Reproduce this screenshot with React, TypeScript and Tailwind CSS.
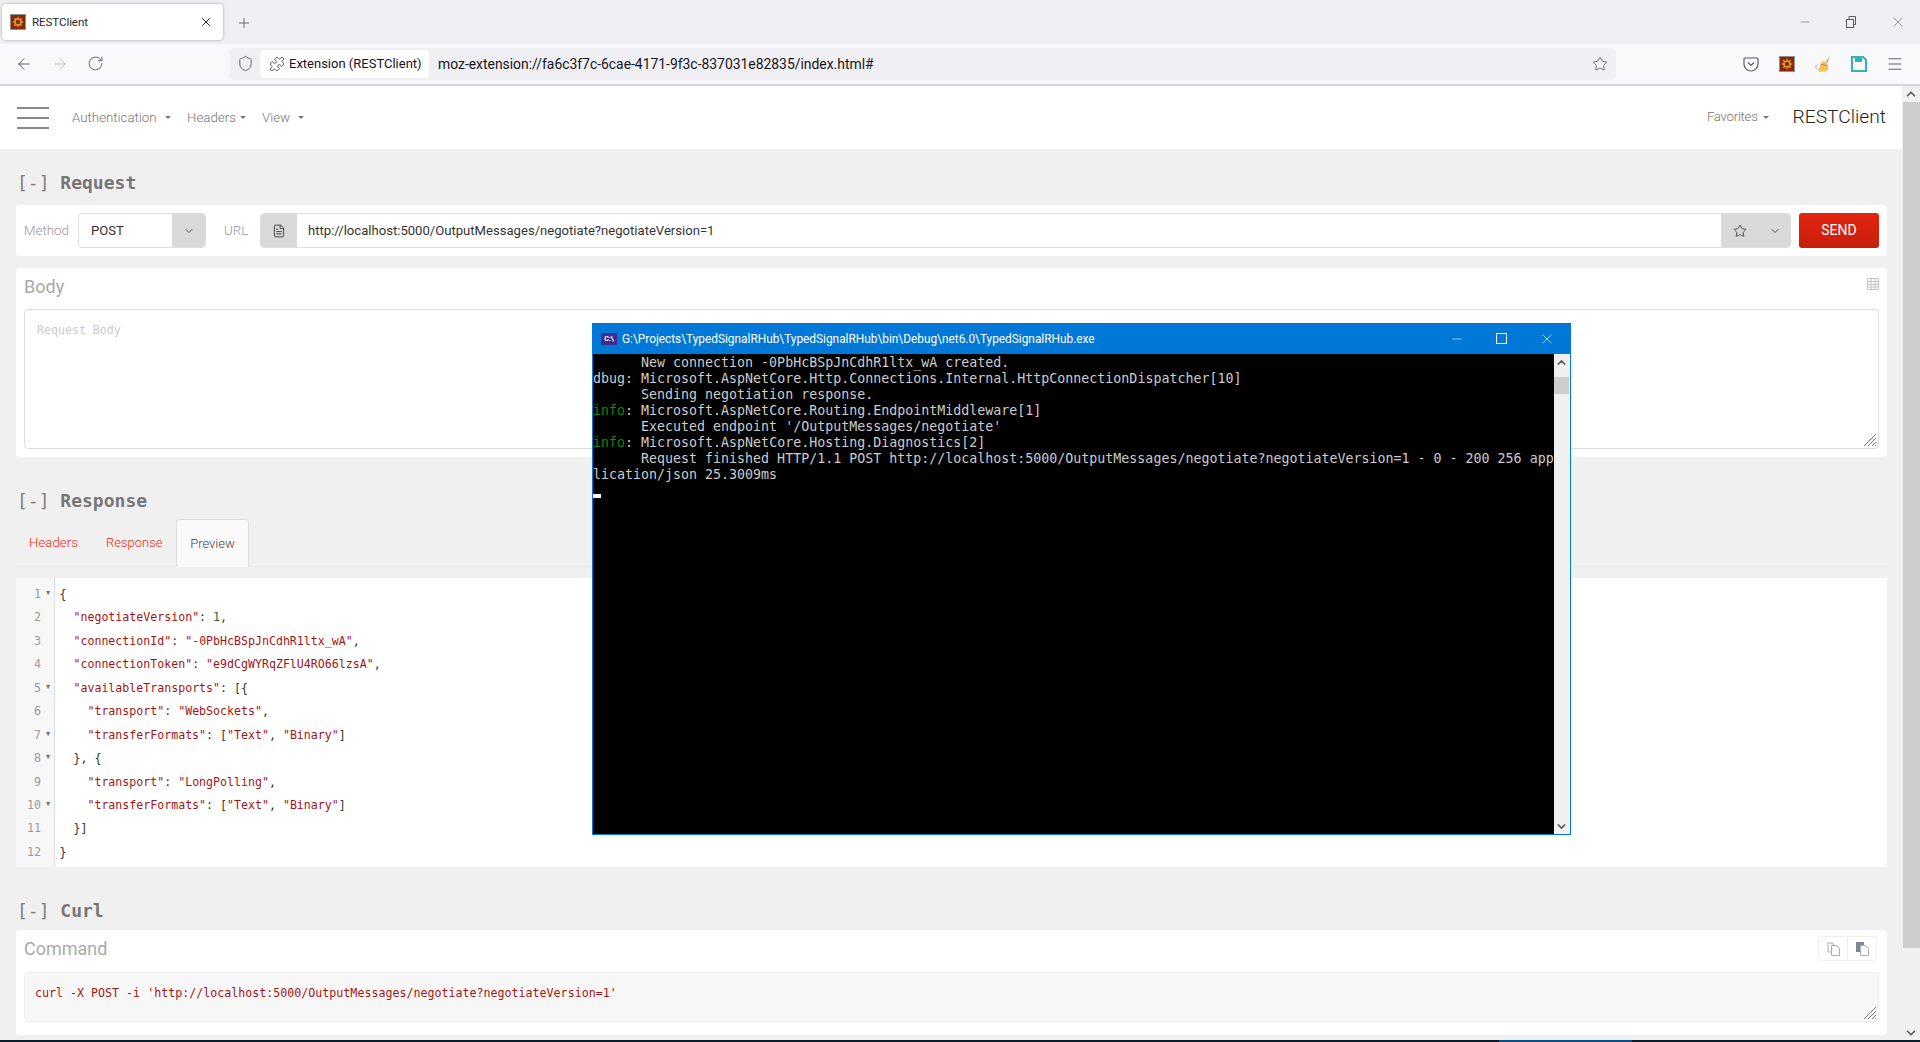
import React from "react";
import {
  ArrowLeft,
  ArrowRight,
  ChevronDown,
  ChevronUp,
  FileText,
  Menu,
  Minus,
  Plus,
  Puzzle,
  RotateCw,
  Shield,
  Star,
  X,
} from "lucide-react";

const sans = "font-['Roboto',sans-serif]";
const mono = "font-['DejaVu_Sans_Mono',monospace]";

function Favicon() {
  return (
    <svg width="16" height="16" viewBox="0 0 16 16" className="shrink-0">
      <rect x="0.500" y="0.500" width="15" height="15" fill="#86270b" stroke="#8f8f8f" />
      <circle cx="8" cy="8" r="3" fill="none" stroke="#e0a02a" strokeWidth="1.500" />
      <path d="M8 2.800v2M8 11.200v2M2.800 8h2M11.200 8h2M4.300 4.300l1.400 1.400M10.300 10.300l1.400 1.400M4.300 11.700l1.400-1.400M10.300 5.700l1.400-1.400" stroke="#e0a02a" strokeWidth="1.300" />
    </svg>
  );
}

function Caret({ gap = "ml-[5px]" }: { gap?: string }) {
  return <span className={`${gap} inline-block border-x-[3px] border-t-[3px] border-x-transparent border-t-[#777] align-middle`} />;
}

function Resize() {
  return (
    <svg width="14" height="14" viewBox="0 0 14 14" className="absolute bottom-[1px] right-[1px]">
      <path d="M1 13L13 1M5 13L13 5M9 13L13 9M12 13L13 12" stroke="#777" strokeWidth="1" />
    </svg>
  );
}

function TabStrip() {
  return (
    <div className="flex h-[44px] items-start bg-[#f0f0f4]">
      <div className="ml-[2px] mt-[4px] flex h-[36px] w-[221px] items-center rounded-[4px] bg-white pl-[8px] pr-[10px] shadow-[0_0_3px_rgba(0,0,0,0.35)]">
        <Favicon />
        <span className={`ml-[6px] mt-[1px] flex-1 text-[11.6px] tracking-[-0.1px] text-[#2a2a33] ${sans}`}>RESTClient</span>
        <X size={14} strokeWidth={1.6} className="text-[#15141a]" />
      </div>
      <Plus size={16} strokeWidth={1.3} className="ml-[13px] mt-[15px] text-[#5b5b66]" />
      <div className="ml-auto mr-[14px] mt-[14px] flex items-center gap-[32px] text-[#5b5b66]">
        <Minus size={14} strokeWidth={1} />
        <svg width="14" height="14" viewBox="0 0 14 14" fill="none" stroke="currentColor">
          <rect x="2.500" y="4.500" width="7" height="8" />
          <path d="M5 4.500V1.500h6.500v8H9.500" />
        </svg>
        <X size={16} strokeWidth={0.9} />
      </div>
    </div>
  );
}

function Toolbar() {
  return (
    <div className="flex h-[42px] items-center border-b-2 border-[#d4d4d6] bg-[#f9f9fb] pb-[1px] text-[#5b5b66]">
      <ArrowLeft size={18} strokeWidth={1.3} className="ml-[15px]" />
      <ArrowRight size={18} strokeWidth={1.3} className="ml-[18px] text-[#bdbdc3]" />
      <RotateCw size={17} strokeWidth={1.3} className="ml-[18px]" />
      <div className="ml-[126px] flex h-[32px] w-[1386px] items-center rounded-[4px] bg-[#f0f0f4] pl-[7px]">
        <Shield size={17} strokeWidth={1.3} />
        <div className={`ml-[6px] flex h-[28px] w-[169px] items-center rounded-[4px] bg-white pl-[9px] text-[#15141a] ${sans}`}>
          <Puzzle size={16} strokeWidth={1.2} className="mr-[4px] text-[#3c3c44]" />
          <span className="mt-[1px] text-[13px]">Extension (RESTClient)</span>
        </div>
        <span className={`ml-[9px] mt-[2px] text-[13.9px] text-[#15141a] ${sans}`}>moz-extension://fa6c3f7c-6cae-4171-9f3c-837031e82835/index.html#</span>
        <Star size={16} strokeWidth={1.3} className="ml-auto mr-[8px]" />
      </div>
      <svg width="16" height="16" viewBox="0 0 16 16" fill="none" stroke="#5b5b66" strokeWidth="1.2" className="ml-[127px]">
        <path d="M2 2h12a1 1 0 0 1 1 1v5a7 7 0 0 1-14 0V3a1 1 0 0 1 1-1z" />
        <path d="M5 6.500l3 3 3-3" />
      </svg>
      <div className="ml-[20px]"><Favicon /></div>
      <svg width="18" height="18" viewBox="0 0 18 18" className="ml-[19px]">
        <path d="M15.500 1l-3.500 6 1.500 1z" fill="#c99a3a" />
        <path d="M10 6c-3 1-4.500 5-6 10 3 1.500 8.500 1 10-1 1-3 0-7-4-9z" fill="#eec35c" />
        <path d="M7 9c2 1 4 2 6 1" stroke="#e07b5a" strokeWidth="1.200" fill="none" />
        <path d="M4 9l-2 3 1 3M2 10l-1 3" stroke="#c9c9c9" fill="none" />
      </svg>
      <svg width="16" height="16" viewBox="0 0 16 16" fill="none" className="ml-[19px]">
        <path d="M1 1h11l3 3v11H1z" stroke="#2fb2b4" strokeWidth="2" />
        <rect x="4" y="1" width="7" height="5" fill="#2fb2b4" />
      </svg>
      <Menu size={18} strokeWidth={1.3} className="ml-[19px]" />
    </div>
  );
}

function NavItem({ label, gap, className = "" }: { label: string; gap?: string; className?: string }) {
  return (
    <span className={`text-[13.3px] font-light text-[#777] ${className}`}>
      {label}
      <Caret gap={gap} />
    </span>
  );
}

function Navbar() {
  return (
    <div className={`flex h-[63px] items-center bg-white ${sans}`}>
      <div className="ml-[17px] flex w-[32px] flex-col gap-[8px]">
        <div className="h-[2px] bg-[#888]" />
        <div className="h-[2px] bg-[#888]" />
        <div className="h-[2px] bg-[#888]" />
      </div>
      <div className="mb-[2px] ml-[23px] w-[115px]"><NavItem label="Authentication" gap="ml-[8px]" /></div>
      <div className="mb-[2px] w-[75px]"><NavItem label="Headers" gap="ml-[4px]" /></div>
      <div className="mb-[2px] w-[60px]"><NavItem label="View" gap="ml-[8px]" /></div>
      <NavItem label="Favorites" className="mb-[2px] ml-auto tracking-[-0.3px]" />
      <span className="ml-[24px] mr-[16px] text-[19.200px] font-light text-[#222]">RESTClient</span>
    </div>
  );
}

function Heading({ title, className = "" }: { title: string; className?: string }) {
  return (
    <div className={`ml-[17px] h-[24px] text-[18px] leading-[24px] text-[#808080] ${mono} ${className}`}>
      [-] <span className="font-bold text-[#767676]">{title}</span>
    </div>
  );
}

function RequestPanel() {
  return (
    <div className={`ml-[16px] mr-[15px] mt-[10px] flex h-[51px] items-center rounded-[3px] bg-white px-[8px] ${sans}`}>
      <span className="w-[54px] text-[13.3px] font-light text-[#999]">Method</span>
      <div className="flex h-[35px] w-[128px] overflow-hidden rounded-[4px] border border-[#ddd]">
        <span className="flex-1 pl-[12px] text-[13.1px] leading-[34px] text-[#333]">POST</span>
        <div className="flex w-[33px] items-center justify-center bg-[#d9d9d9]">
          <ChevronDown size={12} strokeWidth={2} className="text-[#555]" />
        </div>
      </div>
      <span className="ml-[18px] w-[36px] text-[13.3px] font-light text-[#999]">URL</span>
      <div className="flex h-[35px] flex-1 overflow-hidden rounded-[4px] border border-[#ddd]">
        <div className="flex w-[36px] items-center justify-center bg-[#d9d9d9]">
          <FileText size={14} strokeWidth={1.7} className="text-[#444]" />
        </div>
        <span className="flex-1 pl-[11px] text-[13.1px] leading-[34px] text-[#333]">http://localhost:5000/OutputMessages/negotiate?negotiateVersion=1</span>
        <div className="flex w-[69px] items-center bg-[#d9d9d9]">
          <Star size={14} strokeWidth={1.6} className="ml-[12px] text-[#444]" />
          <ChevronDown size={12} strokeWidth={2} className="ml-[22px] text-[#555]" />
        </div>
      </div>
      <div className="ml-[8px] flex h-[35px] w-[80px] items-center justify-center rounded-[3px] bg-gradient-to-b from-[#e2250f] to-[#c81e0c] text-[14px] text-white">SEND</div>
    </div>
  );
}

function BodyPanel() {
  return (
    <div className={`relative ml-[16px] mr-[15px] mt-[12px] h-[189px] rounded-[3px] bg-white px-[8px] pt-[41px] ${sans}`}>
      <span className="absolute left-[8px] top-[5px] text-[18px] text-[#aaa]">Body</span>
      <svg width="12" height="12" viewBox="0 0 12 12" fill="none" stroke="#c4c4c4" className="absolute right-[8px] top-[10px]">
        <path d="M0.500 0.500h11v11h-11zM0.500 3.500h11M0.500 6.500h11M0.500 9h11M4 0.500v11M8 0.500v11" />
      </svg>
      <div className="relative h-[140px] rounded-[4px] border border-[#ddd] pl-[12px] pt-[11px]">
        <span className={`block text-[11.6px] leading-[18px] text-[#ccc] ${mono}`}>Request Body</span>
        <Resize />
      </div>
    </div>
  );
}

function Tabs() {
  return (
    <div className={`ml-[16px] mr-[15px] mt-[6px] flex h-[48px] border-b border-[#eaeaea] ${sans}`}>
      <span className="ml-[13px] w-[49px] self-center text-[13.3px] font-light text-[#f0281a]">Headers</span>
      <span className="ml-[28px] w-[56px] self-center text-[13px] font-light text-[#f0281a]">Response</span>
      <span className="ml-[14px] flex h-[48px] w-[73px] items-center justify-center rounded-t-[4px] border border-b-0 border-[#ddd] bg-[#fafafa] text-[13px] font-light text-[#444]">Preview</span>
    </div>
  );
}

type Tok = [string, "k" | "s" | "n" | "p"];

const tokColor = { k: "text-[#a31515]", s: "text-[#a31515]", n: "text-[#116644]", p: "text-[#333]" };

const code: { fold?: boolean; indent: number; toks: Tok[] }[] = [
  { fold: true, indent: 0, toks: [["{", "p"]] },
  { indent: 2, toks: [['"negotiateVersion"', "k"], [": ", "p"], ["1", "n"], [",", "p"]] },
  { indent: 2, toks: [['"connectionId"', "k"], [": ", "p"], ['"-0PbHcBSpJnCdhR1ltx_wA"', "s"], [",", "p"]] },
  { indent: 2, toks: [['"connectionToken"', "k"], [": ", "p"], ['"e9dCgWYRqZFlU4RO66lzsA"', "s"], [",", "p"]] },
  { fold: true, indent: 2, toks: [['"availableTransports"', "k"], [": [{", "p"]] },
  { indent: 4, toks: [['"transport"', "k"], [": ", "p"], ['"WebSockets"', "s"], [",", "p"]] },
  { fold: true, indent: 4, toks: [['"transferFormats"', "k"], [": [", "p"], ['"Text"', "s"], [", ", "p"], ['"Binary"', "s"], ["]", "p"]] },
  { fold: true, indent: 2, toks: [["}, {", "p"]] },
  { indent: 4, toks: [['"transport"', "k"], [": ", "p"], ['"LongPolling"', "s"], [",", "p"]] },
  { fold: true, indent: 4, toks: [['"transferFormats"', "k"], [": [", "p"], ['"Text"', "s"], [", ", "p"], ['"Binary"', "s"], ["]", "p"]] },
  { indent: 2, toks: [["}]", "p"]] },
  { indent: 0, toks: [["}", "p"]] },
];

function CodePanel() {
  return (
    <div className={`ml-[16px] mr-[15px] mt-[11px] flex h-[289px] bg-white text-[11.6px] leading-[23.45px] ${mono}`}>
      <div className="w-[39px] border-r border-[#ddd] bg-[#f7f7f7] pt-[5px] text-[#999]">
        {code.map((row, i) => (
          <div key={i} className="relative h-[23.45px] w-[25px] text-right">
            {i + 1}
            {row.fold && <span className="absolute left-[30px] top-[-1px] text-[7px] text-[#777]">▼</span>}
          </div>
        ))}
      </div>
      <div className="flex-1 whitespace-pre pl-[4.500px] pt-[5px]">
        {code.map((row, i) => (
          <div key={i} className="h-[23.45px]">
            {" ".repeat(row.indent)}
            {row.toks.map(([t, c], j) => (
              <span key={j} className={tokColor[c]}>{t}</span>
            ))}
          </div>
        ))}
      </div>
    </div>
  );
}

function CommandPanel() {
  return (
    <div className={`relative ml-[16px] mr-[15px] mt-[7px] h-[105px] rounded-[3px] bg-white px-[8px] pt-[42px] ${sans}`}>
      <span className="absolute left-[8px] top-[5px] text-[18px] text-[#aaa]">Command</span>
      <div className="absolute right-[10px] top-[6px] flex h-[25px] w-[59px] rounded-[4px] border border-[#eee]">
        <div className="flex flex-1 items-center justify-center border-r border-[#eee]">
          <svg width="13" height="14" viewBox="0 0 13 14" fill="none" stroke="#a8adb8">
            <path d="M1 1h5v2M1 1v9h3" />
            <path d="M4.500 3.500h5l3 3v7h-8z" />
          </svg>
        </div>
        <div className="flex flex-1 items-center justify-center">
          <svg width="13" height="14" viewBox="0 0 13 14">
            <rect x="0" y="0" width="8" height="10" fill="#7f8694" />
            <path d="M4.500 3.500h5l3 3v7h-8z" fill="#fff" stroke="#a8adb8" />
          </svg>
        </div>
      </div>
      <div className="relative h-[50px] rounded-[4px] border border-[#eee] bg-[#f7f7f7] pl-[10px] pt-[12px]">
        <span className={`block text-[11.65px] text-[#a31515] ${mono}`}>curl -X POST -i 'http://localhost:5000/OutputMessages/negotiate?negotiateVersion=1'</span>
        <Resize />
      </div>
    </div>
  );
}

const consoleLines: { tag?: string; tagClass?: string; text: string }[] = [
  { text: "      New connection -0PbHcBSpJnCdhR1ltx_wA created." },
  { tag: "dbug", tagClass: "text-[#cccccc]", text: ": Microsoft.AspNetCore.Http.Connections.Internal.HttpConnectionDispatcher[10]" },
  { text: "      Sending negotiation response." },
  { tag: "info", tagClass: "text-[#0a8a0a]", text: ": Microsoft.AspNetCore.Routing.EndpointMiddleware[1]" },
  { text: "      Executed endpoint '/OutputMessages/negotiate'" },
  { tag: "info", tagClass: "text-[#0a8a0a]", text: ": Microsoft.AspNetCore.Hosting.Diagnostics[2]" },
  { text: "      Request finished HTTP/1.1 POST http://localhost:5000/OutputMessages/negotiate?negotiateVersion=1 - 0 - 200 256 app" },
  { text: "lication/json 25.3009ms" },
];

function ConsoleWindow() {
  return (
    <div className="absolute left-[592px] top-[323px] flex h-[512px] w-[979px] flex-col border border-[#0078d7] bg-black">
      <div className={`flex h-[30px] shrink-0 items-center bg-[#0078d7] pl-[8px] text-white ${sans}`}>
        <div className="flex h-[12px] w-[16px] items-center justify-center bg-[#3b2f8f] text-[7px] font-bold leading-none">C:\</div>
        <span className="ml-[5px] mt-[2px] text-[11.85px]">G:\Projects\TypedSignalRHub\TypedSignalRHub\bin\Debug\net6.0\TypedSignalRHub.exe</span>
        <Minus size={14} strokeWidth={1} className="ml-auto mr-[1px]" />
        <div className="mb-[1px] ml-[31px] h-[11px] w-[11px] border border-white" />
        <X size={16} strokeWidth={1} className="ml-[32px] mr-[15px]" />
      </div>
      <div className="flex min-h-0 flex-1">
        <div className={`flex-1 whitespace-pre pt-[1px] text-[13.3px] leading-[16px] text-[#cccccc] ${mono}`}>
          {consoleLines.map((l, i) => (
            <div key={i} className="h-[16px]">
              {l.tag && <span className={l.tagClass}>{l.tag}</span>}
              {l.text}
            </div>
          ))}
          <div className="mt-[11px] h-[4px] w-[8px] bg-white" />
        </div>
        <div className="flex w-[17px] flex-col items-center bg-[#f0f0f0] text-[#606060]">
          <ChevronUp size={13} strokeWidth={3} className="mt-[2px]" />
          <div className="mt-[8px] h-[17px] w-[15px] bg-[#cdcdcd]" />
          <ChevronDown size={13} strokeWidth={3} className="mb-[1px] mt-auto" />
        </div>
      </div>
    </div>
  );
}

function PageScrollbar() {
  return (
    <div className="flex w-[18px] shrink-0 flex-col items-center bg-[#f0f0f0] text-[#606060]">
      <ChevronUp size={14} strokeWidth={3} className="mt-[1px]" />
      <div className="mt-[1px] h-[846px] w-[17px] bg-[#cdcdcd]" />
      <ChevronDown size={14} strokeWidth={3} className="mt-auto" />
    </div>
  );
}

export default function App() {
  return (
    <div className="relative flex h-[1042px] w-[1920px] flex-col overflow-hidden bg-[#f0f0f0]">
      <TabStrip />
      <Toolbar />
      <div className="flex min-h-0 flex-1">
        <div className="min-w-0 flex-1">
          <Navbar />
          <Heading title="Request" className="mt-[22px]" />
          <RequestPanel />
          <BodyPanel />
          <Heading title="Response" className="mt-[32px]" />
          <Tabs />
          <CodePanel />
          <Heading title="Curl" className="mt-[32px]" />
          <CommandPanel />
        </div>
        <PageScrollbar />
      </div>
      <div className="flex h-[2px] shrink-0 bg-[#0c1c2a]">
        <div className="ml-[1499px] w-[133px] bg-[#0a4f8a]" />
      </div>
      <ConsoleWindow />
    </div>
  );
}
